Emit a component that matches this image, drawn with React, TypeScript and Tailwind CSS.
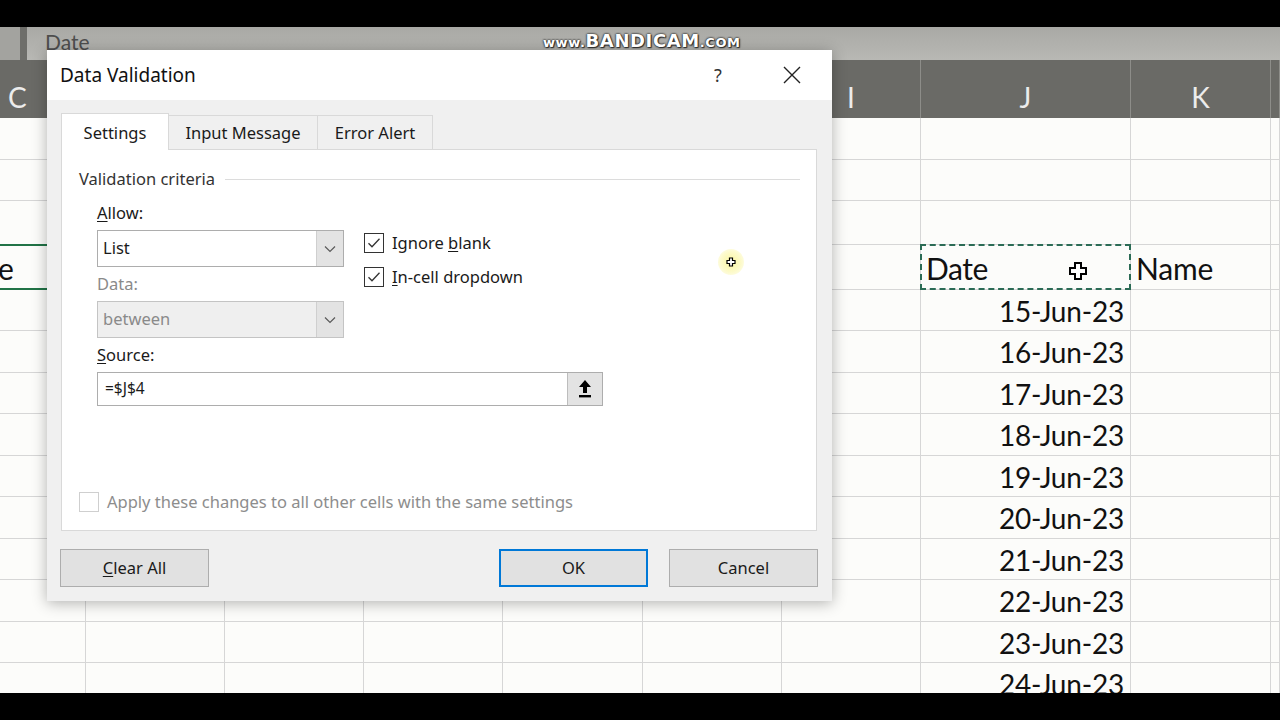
import type { ReactNode } from 'react'

const COLS = ['w-[86px]', 'w-[139px]', 'w-[139px]', 'w-[139px]', 'w-[140px]', 'w-[139px]', 'w-[139px]', 'w-[210px]', 'w-[140px]', 'w-[9px]']
const HEAD = ['C', 'D', 'E', 'F', 'G', 'H', 'I', 'J', 'K', '']
const ROWS = ['h-[42px]', 'h-[41px]', 'h-[44px]', 'h-[45px]', 'h-[41px]', 'h-[42px]', 'h-[41px]', 'h-[42px]', 'h-[41px]', 'h-[42px]', 'h-[41px]', 'h-[42px]', 'h-[41px]', 'h-[42px]']

const dateFor = (r: number) => (r >= 4 ? `${11 + r}-Jun-23` : '')

function Chevron() {
  return (
    <svg width="12" height="8" viewBox="0 0 12 8" fill="none">
      <path d="M1 1.5 L6 6.5 L11 1.5" stroke="#5a5a5a" strokeWidth="1.2" />
    </svg>
  )
}

function Check() {
  return (
    <svg width="14" height="12" viewBox="0 0 14 12" fill="none">
      <path d="M1.5 6.2 L5 9.8 L12.5 1.8" stroke="#333" strokeWidth="1.3" />
    </svg>
  )
}

function Checkbox({ checked, disabled }: { checked?: boolean; disabled?: boolean }) {
  return (
    <div
      className={
        disabled
          ? 'w-[20px] h-[20px] border border-[#cfcfcf] bg-white shrink-0'
          : 'w-[20px] h-[20px] border border-[#333] bg-white shrink-0 flex items-center justify-center'
      }
    >
      {checked && <Check />}
    </div>
  )
}

function Select({ value, disabled }: { value: string; disabled?: boolean }) {
  return (
    <div
      className={
        disabled
          ? 'w-[247px] h-[37px] border border-[#c4c4c4] bg-[#efefef] flex'
          : 'w-[247px] h-[37px] border border-[#adadad] bg-white flex'
      }
    >
      <div className={disabled ? 'flex-1 pl-[5px] flex items-center text-[#8a8a8a]' : 'flex-1 pl-[5px] flex items-center text-[#1a1a1a]'}>
        {value}
      </div>
      <div className="w-[27px] bg-[#e3e3e3] border-l border-[#cfcfcf] flex items-center justify-center">
        <Chevron />
      </div>
    </div>
  )
}

function Btn({ children, primary }: { children: ReactNode; primary?: boolean }) {
  return (
    <div
      className={
        primary
          ? 'w-[149px] h-[38px] bg-[#e1e1e1] border-2 border-[#0078d7] flex items-center justify-center text-[#1a1a1a]'
          : 'w-[149px] h-[38px] bg-[#e1e1e1] border border-[#adadad] flex items-center justify-center text-[#1a1a1a]'
      }
    >
      {children}
    </div>
  )
}

function Dialog() {
  return (
    <div className="absolute left-[47px] top-[23px] w-[785px] h-[551px] bg-[#f0f0f0] shadow-[0_2px_14px_rgba(0,0,0,0.3)] flex flex-col text-[16.5px] font-['Noto_Sans',sans-serif]">
      {/* title bar */}
      <div className="h-[50px] bg-white flex items-center pl-[13px] shrink-0">
        <div className="text-[19px] text-[#111]">Data Validation</div>
        <div className="ml-auto w-[20px] mr-[54px] text-[18px] text-[#333] text-center">?</div>
        <div className="w-[20px] mr-[30px] flex items-center justify-center">
          <svg width="18" height="18" viewBox="0 0 18 18" fill="none">
            <path d="M1 1 L17 17 M17 1 L1 17" stroke="#222" strokeWidth="1.4" />
          </svg>
        </div>
      </div>

      {/* tabs */}
      <div className="flex items-end pl-[14px] mt-[12px] h-[37px] shrink-0">
        <div className="w-[108px] h-[37px] pt-[2px] bg-white border border-b-0 border-[#d9d9d9] flex items-center justify-center text-[#1a1a1a] relative z-10 translate-y-[1px]">
          Settings
        </div>
        <div className="w-[149px] h-[34px] pt-[2px] border border-b-0 border-l-0 border-[#d9d9d9] flex items-center justify-center text-[#1a1a1a]">
          Input Message
        </div>
        <div className="w-[115px] h-[34px] pt-[2px] border border-b-0 border-l-0 border-[#d9d9d9] flex items-center justify-center text-[#1a1a1a]">
          Error Alert
        </div>
      </div>

      {/* panel */}
      <div className="ml-[14px] w-[756px] h-[382px] bg-white border border-[#d9d9d9] shrink-0 px-[17px] pt-[19px] text-[#1a1a1a]">
        <div className="flex items-center h-[20px]">
          <span className="text-[#333]">Validation criteria</span>
          <div className="flex-1 ml-[10px] mr-[-1px] h-px bg-[#dcdcdc]" />
        </div>

        <div className="flex pl-[18px]">
          <div className="flex flex-col w-[247px]">
            <div className="mt-[14px] h-[20px] leading-[20px]">
              <u className="underline-offset-2">A</u>llow:
            </div>
            <div className="mt-[7px]">
              <Select value="List" />
            </div>
            <div className="mt-[7px] h-[20px] leading-[20px] text-[#8a8a8a]">Data:</div>
            <div className="mt-[7px]">
              <Select value="between" disabled />
            </div>
          </div>
          <div className="flex flex-col ml-[20px] pt-[44px] gap-[14px]">
            <div className="flex items-center gap-[8px] h-[20px]">
              <Checkbox checked />
              <span>
                Ignore <u className="underline-offset-2">b</u>lank
              </span>
            </div>
            <div className="flex items-center gap-[8px] h-[20px]">
              <Checkbox checked />
              <span>
                <u className="underline-offset-2">I</u>n-cell dropdown
              </span>
            </div>
          </div>
        </div>

        <div className="pl-[18px]">
          <div className="mt-[7px] h-[20px] leading-[20px]">
            <u className="underline-offset-2">S</u>ource:
          </div>
          <div className="mt-[7px] w-[506px] h-[34px] border border-[#adadad] bg-white flex">
            <div className="flex-1 pl-[7px] flex items-center text-[15.5px]">=$J$4</div>
            <div className="w-[35px] bg-[#e3e3e3] border-l border-[#bdbdbd] flex items-center justify-center">
              <svg width="16" height="20" viewBox="0 0 16 20">
                <path d="M8 1 L14 8 L10 8 L10 14 L6 14 L6 8 L2 8 Z" fill="#000" />
                <rect x="2" y="16" width="12" height="2.4" fill="#000" />
              </svg>
            </div>
          </div>
        </div>

        <div className="mt-[86px] flex items-center gap-[8px] h-[20px]">
          <Checkbox disabled />
          <span className="text-[#8d8d8d]">Apply these changes to all other cells with the same settings</span>
        </div>
      </div>

      {/* buttons */}
      <div className="flex mt-[18px] pl-[13px]">
        <Btn>
          <span>
            <u className="underline-offset-2">C</u>lear All
          </span>
        </Btn>
        <div className="ml-[290px]">
          <Btn primary>OK</Btn>
        </div>
        <div className="ml-[21px]">
          <Btn>Cancel</Btn>
        </div>
      </div>
    </div>
  )
}

function Sheet() {
  return (
    <div className="relative h-[666px] overflow-hidden bg-[#fcfcfa] font-['Lato',sans-serif]">
      {/* formula bar */}
      <div className="h-[33px] flex bg-gradient-to-b from-[#a9a9a5] to-[#b8b8b4]">
        <div className="w-[20px] bg-[#a3a39f]" />
        <div className="w-[7px] bg-[#6e6e6a]" />
        <div className="pl-[18px] pt-[1px] text-[21px] text-[#4e4e4e] leading-[28px]">Date</div>
      </div>

      {/* column header */}
      <div className="h-[58px] flex bg-[#6a6a66]">
        {COLS.map((w, i) => (
          <div
            key={i}
            className={`${w} shrink-0 h-full border-r border-[#8d8d89] flex items-end pb-[5px] text-[28px] leading-[32px] text-[#ececec] ${i === 0 ? 'pl-[8px]' : 'justify-center'}`}
          >
            {HEAD[i]}
          </div>
        ))}
      </div>

      {/* grid */}
      {ROWS.map((h, r) => (
        <div key={r} className={`${h} flex`}>
          {COLS.map((w, c) => (
            <div key={c} className={`${w} shrink-0 h-full border-r border-b border-[#d6d6d6] relative`}>
              {c === 0 && r === 3 && (
                <>
                  <div className="absolute left-0 right-[-1px] top-[-1px] bottom-[-1px] border-y-2 border-[#217346]" />
                  <div className="absolute left-[-2px] top-[8px] text-[30px] leading-[30px] text-[#111]">e</div>
                </>
              )}
              {c === 7 && r === 3 && (
                <>
                  <div className="absolute left-[-1px] top-[-1px] right-[-1px] bottom-[-1px] border-2 border-dashed border-[#2b6b55]" />
                  <div className="absolute left-[5px] top-[8px] text-[30px] leading-[30px] text-[#111] tracking-[-0.4px]">Date</div>
                  <div className="absolute left-[148px] top-[17px]">
                    <svg width="18" height="18" viewBox="0 0 18 18">
                      <path d="M6 1 H12 V6 H17 V12 H12 V17 H6 V12 H1 V6 H6 Z" fill="#fff" stroke="#000" strokeWidth="2" />
                    </svg>
                  </div>
                </>
              )}
              {c === 8 && r === 3 && (
                <div className="absolute left-[5px] top-[8px] text-[30px] leading-[30px] text-[#111] tracking-[-0.2px]">Name</div>
              )}
              {c === 7 && dateFor(r) && (
                <div className="absolute right-[6px] top-[6px] text-[28px] leading-[30px] text-[#111] tracking-[-0.2px]">
                  {dateFor(r)}
                </div>
              )}
            </div>
          ))}
        </div>
      ))}

      <Dialog />

      {/* recorder watermark, burned in over everything */}
      <div className="absolute left-[543px] top-[4px] z-20 leading-[20px] text-white font-['DejaVu_Sans',sans-serif] font-bold tracking-[0.6px] [text-shadow:0_0_2px_#222,0_0_2px_#222,1px_1px_1px_#333]">
        <span className="text-[13px]">www.</span>
        <span className="text-[18px]">BANDICAM</span>
        <span className="text-[13px]">.COM</span>
      </div>

      {/* mouse highlight */}
      <div className="absolute left-[718px] top-[222px] w-[26px] h-[26px] rounded-full bg-[radial-gradient(circle,rgba(250,245,150,0.9)_0%,rgba(250,245,150,0.5)_55%,rgba(250,245,150,0)_100%)] flex items-center justify-center">
        <svg width="10" height="10" viewBox="0 0 10 10">
          <path d="M3.5 1 H6.5 V3.5 H9 V6.5 H6.5 V9 H3.5 V6.5 H1 V3.5 H3.5 Z" fill="#fff" stroke="#000" strokeWidth="1.2" />
        </svg>
      </div>
    </div>
  )
}

export default function App() {
  return (
    <div className="w-[1280px] h-[720px] bg-black flex flex-col overflow-hidden">
      <div className="h-[27px] shrink-0" />
      <Sheet />
      <div className="h-[27px] shrink-0" />
    </div>
  )
}
